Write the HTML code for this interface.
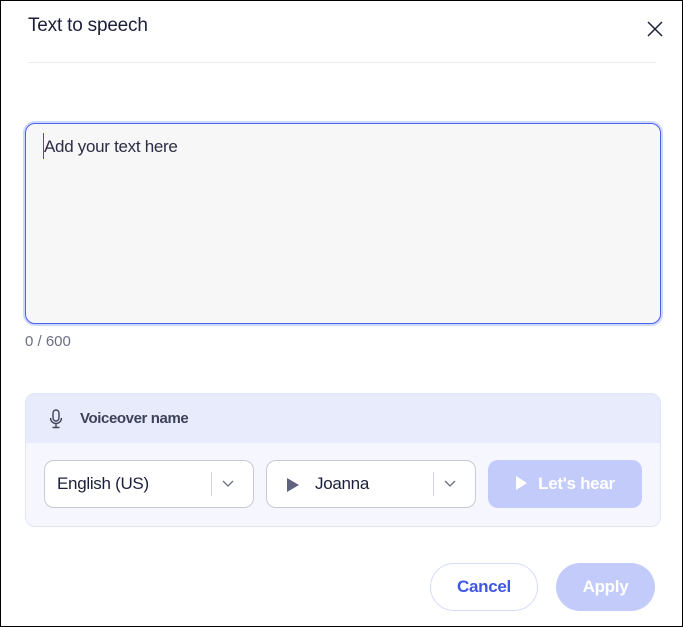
<!DOCTYPE html>
<html><head><style>
*{box-sizing:border-box;margin:0;padding:0}
body{width:683px;height:627px;background:#fff;font-family:"Liberation Sans",sans-serif;position:relative;overflow:hidden}
.frame{position:absolute;inset:0;border:1px solid #000}
.abs{position:absolute}
.title{left:28px;top:15px;font-size:19px;color:#1c1f3a;letter-spacing:-0.2px}
.sep{left:28px;top:62px;width:628px;height:1px;background:#ececf0}
.ta{left:25px;top:123px;width:636px;height:201px;background:#f7f7f7;border:1.5px solid #4a62f0;border-radius:10px;box-shadow:0 0 0 2px #d0d7fc}
.ph{left:44px;top:137px;font-size:17px;color:#2a2d45;letter-spacing:-0.3px}
.caret{left:43px;top:133px;width:1px;height:26px;background:#3550e8}
.count{left:25px;top:333px;font-size:15px;color:#6b6f80}
.panel{left:25px;top:393px;width:636px;height:134px;border:1px solid #e0e4f8;border-radius:10px;background:#f6f7fe;overflow:hidden}
.ph2{left:0;top:0;width:100%;height:49px;background:#e8ebfc}
.vn{left:54px;top:16px;font-size:15px;font-weight:bold;color:#3e4259;letter-spacing:-0.4px}
.sel{top:460px;width:210px;height:48px;background:#fff;border:1px solid #c8c9d2;border-radius:10px}
.sel .t{position:absolute;top:13px;font-size:17px;color:#1c1f3a;letter-spacing:-0.3px}
.sel .d{position:absolute;left:166px;top:11px;width:1px;height:24px;background:#d4d5dc}
.btn{border-radius:24px;font-size:17px;font-weight:bold;text-align:center;letter-spacing:-0.3px}
</style></head><body>
<div class="frame"></div>
<div class="abs title">Text to speech</div>
<svg class="abs" style="left:646px;top:20px" width="18" height="18" viewBox="0 0 18 18"><path d="M2 2L16 16M16 2L2 16" stroke="#1c1f3a" stroke-width="1.5"/></svg>
<div class="abs sep"></div>
<div class="abs ta"></div>
<div class="abs caret"></div>
<div class="abs ph">Add your text here</div>
<div class="abs count">0 / 600</div>
<div class="abs panel"><div class="abs ph2"></div>
<svg class="abs" style="left:23px;top:15px" width="14" height="20" viewBox="0 0 14 20"><rect x="4" y="1" width="6" height="11" rx="3" fill="none" stroke="#3e4259" stroke-width="1.4"/><path d="M1.5 9a5.5 5.5 0 0 0 11 0M7 14.5V18M3.5 18.5h7" fill="none" stroke="#3e4259" stroke-width="1.4"/></svg>
<div class="abs vn">Voiceover name</div></div>
<div class="abs sel" style="left:44px"><div class="t" style="left:12px">English (US)</div><div class="d"></div>
<svg style="position:absolute;left:177px;top:19px" width="12" height="8" viewBox="0 0 12 8"><path d="M1 1l5 5 5-5" fill="none" stroke="#6b6f80" stroke-width="1.3"/></svg></div>
<div class="abs sel" style="left:266px"><svg style="position:absolute;left:19px;top:16px" width="14" height="16" viewBox="0 0 14 16"><path d="M1 1L13 8L1 15Z" fill="#5f6380"/></svg><div class="t" style="left:48px">Joanna</div><div class="d"></div>
<svg style="position:absolute;left:177px;top:19px" width="12" height="8" viewBox="0 0 12 8"><path d="M1 1l5 5 5-5" fill="none" stroke="#6b6f80" stroke-width="1.3"/></svg></div>
<div class="abs btn" style="left:488px;top:460px;width:154px;height:48px;background:#c3cbfb;border-radius:10px;color:#fff;line-height:48px"><svg style="vertical-align:-2px;margin-right:10px" width="13" height="16" viewBox="0 0 13 16"><path d="M1 1L12 8L1 15Z" fill="#fff"/></svg>Let's hear</div>
<div class="abs btn" style="left:430px;top:563px;width:108px;height:48px;border:1px solid #d7dcfb;color:#3f57e8;line-height:46px">Cancel</div>
<div class="abs btn" style="left:556px;top:563px;width:99px;height:48px;background:#c3cbfb;color:#fff;line-height:48px">Apply</div>
</body></html>
